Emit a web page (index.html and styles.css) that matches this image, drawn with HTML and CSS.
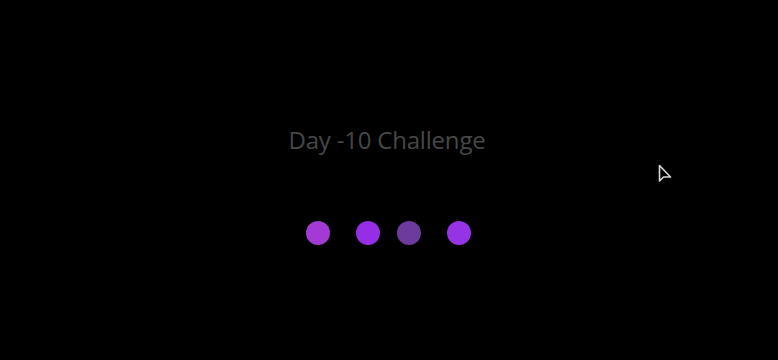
FILE: index.html
```html
<!DOCTYPE html>
<html>
<head>
<meta charset="utf-8">
<link rel="stylesheet" href="styles.css">
</head>
<body>
<main class="stage">
  <h1 class="title">Day -10 Challenge</h1>
  <div class="dots">
    <span class="dot dot-1"></span>
    <span class="dot dot-2"></span>
    <span class="dot dot-3"></span>
    <span class="dot dot-4"></span>
  </div>
</main>
<svg class="cursor" width="16" height="22" viewBox="0 0 16 22">
  <path d="M1.5 1.5 L1.5 17 L5.5 13 L12.5 13 Z" fill="#000" stroke="#d8d8d8" stroke-width="1.6" stroke-linejoin="round"/>
</svg>
</body>
</html>
```
FILE: styles.css
```css
html, body {
  margin: 0;
  padding: 0;
  background: #000;
  width: 778px;
  height: 360px;
  overflow: hidden;
}
.stage {
  display: flex;
  flex-direction: column;
  align-items: center;
  padding-top: 122px;
}
.title {
  margin: 0;
  font-family: "Open Sans", "Noto Sans", sans-serif;
  font-weight: 400;
  font-size: 24px;
  line-height: 36px;
  letter-spacing: -0.2px;
  color: #474747;
  transform: translateX(-2px);
}
.dots {
  display: flex;
  margin-top: 63px;
  transform: translateX(-1px);
}
.dot {
  width: 24px;
  height: 24px;
  border-radius: 50%;
  filter: blur(0.4px);
}
.dot-1 { background: #a43ad6; }
.dot-2 { background: #962ee6; margin-left: 26px; }
.dot-3 { background: #6d3a9e; margin-left: 17px; }
.dot-4 { background: #9633e6; margin-left: 26px; }
.cursor {
  position: absolute;
  left: 658px;
  top: 164px;
}
```
